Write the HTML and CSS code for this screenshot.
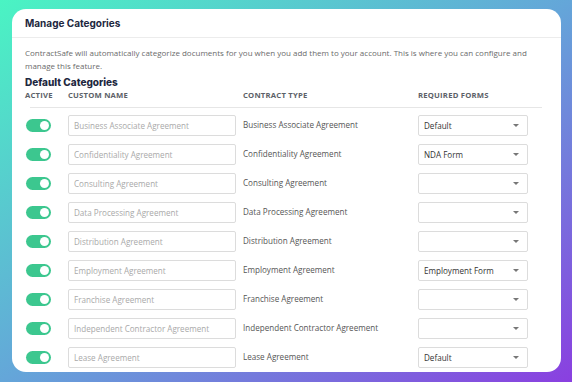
FILE: index.html
```html
<!DOCTYPE html>
<html lang="en">
<head>
<meta charset="utf-8">
<title>Manage Categories</title>
<link rel="stylesheet" href="styles.css">
</head>
<body>
<div class="card">
  <div class="card-header"><h1 class="title">Manage Categories</h1></div>
  <div class="card-body">
    <p class="desc">ContractSafe will automatically categorize documents for you when you add them to your account. This is where you can configure and manage this feature.</p>
    <h2 class="section">Default Categories</h2>
    <div class="grid head">
      <span>Active</span><span>Custom Name</span><span>Contract Type</span><span>Required Forms</span>
    </div>
    <div class="divider"></div>
    <div class="rows">
      <div class="grid row"><span class="toggle"></span><input class="name" placeholder="Business Associate Agreement"><span class="type">Business Associate Agreement</span><div class="select">Default</div></div>
      <div class="grid row"><span class="toggle"></span><input class="name" placeholder="Confidentiality Agreement"><span class="type">Confidentiality Agreement</span><div class="select">NDA Form</div></div>
      <div class="grid row"><span class="toggle"></span><input class="name" placeholder="Consulting Agreement"><span class="type">Consulting Agreement</span><div class="select"></div></div>
      <div class="grid row"><span class="toggle"></span><input class="name" placeholder="Data Processing Agreement"><span class="type">Data Processing Agreement</span><div class="select"></div></div>
      <div class="grid row"><span class="toggle"></span><input class="name" placeholder="Distribution Agreement"><span class="type">Distribution Agreement</span><div class="select"></div></div>
      <div class="grid row"><span class="toggle"></span><input class="name" placeholder="Employment Agreement"><span class="type">Employment Agreement</span><div class="select">Employment Form</div></div>
      <div class="grid row"><span class="toggle"></span><input class="name" placeholder="Franchise Agreement"><span class="type">Franchise Agreement</span><div class="select"></div></div>
      <div class="grid row"><span class="toggle"></span><input class="name" placeholder="Independent Contractor Agreement"><span class="type">Independent Contractor Agreement</span><div class="select"></div></div>
      <div class="grid row"><span class="toggle"></span><input class="name" placeholder="Lease Agreement"><span class="type">Lease Agreement</span><div class="select">Default</div></div>
    </div>
  </div>
</div>
</body>
</html>
```
FILE: styles.css
```css
html, body {
  margin: 0;
  height: 100%;
}
body {
  background: linear-gradient(to bottom right, #4af4c3 0%, #64a6d9 50%, #8a3fe0 100%);
  padding: 9px 11px 10px 12px;
  box-sizing: border-box;
  font-family: "Open Sans", "Liberation Sans", sans-serif;
  overflow: hidden;
}
.card {
  background: #fff;
  border-radius: 14px;
  height: 363px;
  overflow: hidden;
}
.card-header {
  height: 28px;
  border-bottom: 1px solid #ececec;
  display: flex;
  align-items: center;
  padding-left: 13px;
}
.title {
  margin: 0;
  font-family: "Inter", "Lato", sans-serif;
  font-weight: 700;
  font-size: 10px;
  color: #1d2740;
}
.card-body {
  padding: 8px 21px 0 13px;
}
.desc {
  margin: 0;
  font-size: 8px;
  line-height: 13px;
  color: #6b6b6b;
}
.section {
  margin: 4px 0 0;
  font-family: "Inter", "Lato", sans-serif;
  font-weight: 800;
  font-size: 10px;
  line-height: 13px;
  color: #1d2740;
}
.grid {
  display: grid;
  grid-template-columns: 43px 175px 175px 110px;
  align-items: center;
}
.head {
  font-size: 7.7px;
  font-weight: 700;
  text-transform: uppercase;
  color: #5c6168;
  line-height: 12px;
  letter-spacing: 0.2px;
}
.divider {
  height: 1px;
  background: #e6e6e6;
  margin: 6px 0 3px 5px;
  width: 512px;
}
.row {
  height: 29px;
}
.toggle {
  position: relative;
  width: 25px;
  height: 13px;
  border-radius: 7px;
  background: #3cc78f;
  margin-left: 1px;
}
.toggle::after {
  content: "";
  position: absolute;
  right: 2px;
  top: 2px;
  width: 9px;
  height: 9px;
  border-radius: 50%;
  background: #fff;
}
.name {
  box-sizing: border-box;
  width: 168px;
  height: 21px;
  border: 1px solid #dcdcdc;
  border-radius: 2px;
  padding: 0 0 0 5px;
  font-family: "Open Sans", "Liberation Sans", sans-serif;
  font-size: 8.1px;
  color: #444;
  outline: none;
}
.name::placeholder {
  color: #a9a9a9;
}
.type {
  font-size: 8.1px;
  color: #555;
  margin-top: -2px;
}
.select {
  position: relative;
  box-sizing: border-box;
  width: 110px;
  height: 21px;
  border: 1px solid #dcdcdc;
  border-radius: 2px;
  padding-left: 5px;
  font-size: 8.1px;
  line-height: 19px;
  color: #333;
}
.select::after {
  content: "";
  position: absolute;
  right: 8px;
  top: 8px;
  border-left: 3px solid transparent;
  border-right: 3px solid transparent;
  border-top: 3px solid #777;
}
```
